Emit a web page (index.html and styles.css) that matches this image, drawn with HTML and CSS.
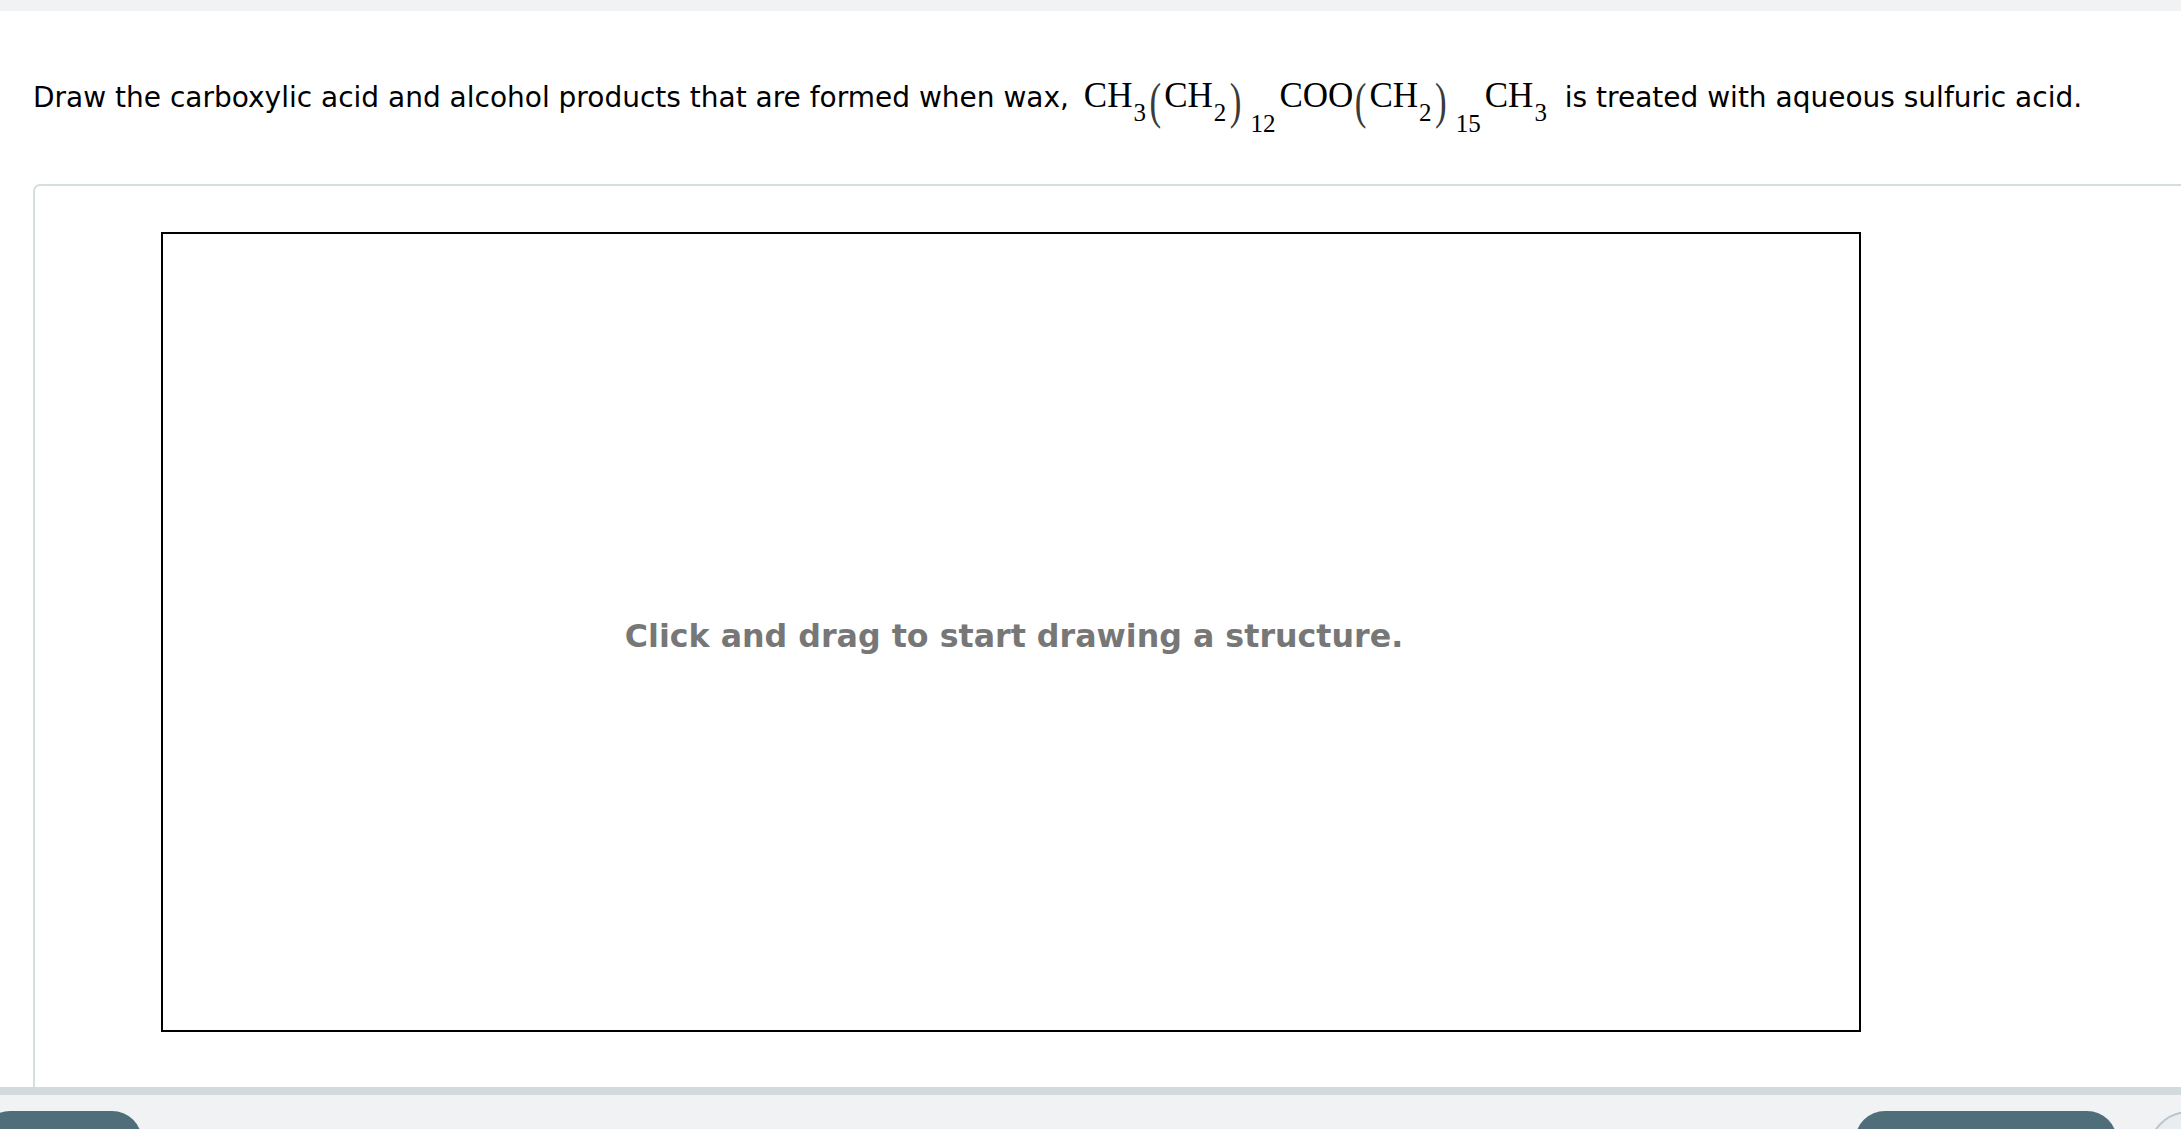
FILE: index.html
```html
<!DOCTYPE html>
<html lang="en">
<head>
<meta charset="utf-8">
<title>Hydrolysis of a wax</title>
<link rel="stylesheet" href="styles.css">
</head>
<body>
<div class="page">
  <div class="topstrip"></div>
  <main class="content">
    <p class="question">Draw the carboxylic acid and alcohol products that are formed when wax, <span class="formula">CH<sub class="sub">3</sub><span class="paren">(</span>CH<sub class="sub">2</sub><span class="paren">)</span><sub class="sub-low">12</sub>COO<span class="paren">(</span>CH<sub class="sub">2</sub><span class="paren">)</span><sub class="sub-low">15</sub>CH<sub class="sub">3</sub></span> is treated with aqueous sulfuric acid.</p>
    <section class="panel">
      <div class="sketcher">
        <span class="hint">Click and drag to start drawing a structure.</span>
      </div>
    </section>
  </main>
  <footer class="footer">
    <button class="btn btn-left" type="button"></button>
    <div class="footer-right">
      <button class="btn btn-main" type="button"></button>
      <span class="round"></span>
    </div>
  </footer>
</div>
</body>
</html>
```

FILE: styles.css
```css
html, body {
  margin: 0;
  height: 100%;
}

body {
  background: #ffffff;
  color: #000000;
  font-family: Verdana, "DejaVu Sans", sans-serif;
  overflow: hidden;
}

.page {
  height: 100vh;
  display: flex;
  flex-direction: column;
}

.topstrip {
  flex: none;
  height: 11px;
  background: #f1f2f4;
}

.content {
  flex: 1;
  min-height: 0;
  overflow: hidden;
  padding-left: 33px;
}

/* question text with inline chemical formula */
.question {
  margin: 0;
  padding-top: 67px;
  font-size: 28px;
  line-height: 40px;
  white-space: nowrap;
}

.formula {
  font-family: "Liberation Serif", "Times New Roman", serif;
  font-size: 35px;
  line-height: 0;
  margin: 0 7px 0 6px;
}

.sub,
.sub-low {
  font-size: 25px;
  line-height: 0;
  vertical-align: -14px;
  margin: 0 2px 0 1px;
}

.sub-low {
  vertical-align: -25px;
  margin: 0 4px 0 6px;
}

/* stretched brackets around the repeating CH2 unit */
.paren {
  display: inline-block;
  color: #3a3a3a;
  transform: scaleY(1.42);
  vertical-align: -6px;
  line-height: 1;
  margin: 0 3px 0 1.5px;
}

/* answer panel */
.panel {
  margin-top: 60px;
  margin-right: -20px;
  height: 1000px;
  border: 2px solid #d5dde1;
  border-bottom: none;
  border-radius: 7px 0 0 0;
  padding: 46px 0 0 126px;
}

.sketcher {
  box-sizing: border-box;
  width: 1700px;
  height: 800px;
  border: 2px solid #000000;
  display: flex;
  align-items: center;
  justify-content: center;
  background: #ffffff;
}

.hint {
  font-size: 31.7px;
  font-weight: bold;
  color: #777777;
  padding: 8px 0 0 6px;
}

/* bottom toolbar */
.footer {
  flex: none;
  box-sizing: border-box;
  height: 42px;
  border-top: 8px solid #d3dadd;
  background: #f0f2f4;
  display: flex;
  align-items: flex-start;
  overflow: hidden;
}

.btn {
  border: none;
  padding: 0;
  margin-top: 16px;
  height: 62px;
  border-radius: 30px;
  background: #4f6e7a;
  flex: none;
}

.btn-left {
  width: 162px;
  margin-left: -20px;
}

.footer-right {
  margin-left: auto;
  margin-right: -49px;
  display: flex;
  align-items: flex-start;
  gap: 31px;
}

.btn-main {
  width: 262px;
}

.round {
  flex: none;
  box-sizing: border-box;
  margin-top: 16px;
  width: 82px;
  height: 82px;
  border-radius: 50%;
  border: 2px solid #b8c6cc;
  background: #e9edef;
}
```
